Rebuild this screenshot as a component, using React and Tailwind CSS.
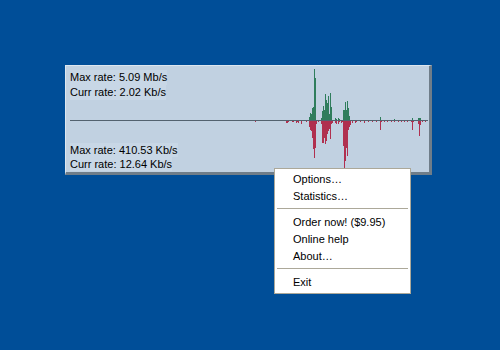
import React from "react";

const bars = [
  // [x, up, down]
  [255, 0, 1], [286, 0, 2], [287, 0, 2], [288, 0, 1], [292, 0, 1], [293, 0, 1],
  [296, 0, 2], [297, 0, 1], [298, 0, 2], [301, 0, 3], [306, 0, 1],
  [309, 3, 6], [310, 7, 9], [311, 6, 10], [312, 12, 17], [313, 13, 28], [314, 51, 37], [315, 42, 27], [316, 0, 3],
  [318, 0, 1], [321, 2, 3], [322, 9, 22], [323, 14, 22], [324, 10, 17], [325, 26, 23], [326, 20, 20],
  [327, 17, 13], [328, 24, 10], [329, 6, 8], [330, 27, 18], [331, 13, 3], [332, 0, 2],
  [335, 2, 2], [336, 1, 3], [338, 2, 3], [339, 1, 1],
  [341, 0, 2], [342, 0, 1], [343, 10, 25], [344, 10, 48], [345, 18, 40], [346, 10, 27], [347, 19, 35],
  [348, 12, 9], [349, 4, 6], [350, 0, 4],
  [352, 0, 2], [355, 0, 2], [356, 0, 1], [360, 0, 1], [364, 0, 2], [368, 0, 1], [372, 0, 1],
  [376, 0, 1], [380, 3, 9], [381, 0, 1], [384, 0, 1], [387, 0, 1], [391, 0, 1], [394, 1, 1],
  [398, 0, 1], [401, 0, 1], [404, 0, 1], [407, 0, 1], [411, 0, 1], [412, 2, 9], [413, 0, 1],
  [418, 2, 3], [419, 2, 15], [420, 2, 4], [422, 0, 1], [425, 0, 1],
];

const OX = 66;
const OY = 66;
const CY = 120;

function Graph() {
  return (
    <svg
      className="absolute inset-0"
      width="364"
      height="106"
      viewBox="0 0 364 106"
      shapeRendering="crispEdges"
    >
      <rect x={70 - OX} y={CY - OY} width={358} height={1} fill="#53626f" />
      {bars.map(([x, up, down], i) => (
        <g key={i}>
          {up > 0 && (
            <rect x={x - OX} y={CY - OY - up} width={1} height={up} fill="#2f7d5c" />
          )}
          {down > 0 && (
            <rect x={x - OX} y={CY - OY + 1} width={1} height={down} fill="#b0304f" />
          )}
        </g>
      ))}
    </svg>
  );
}

function Item({ children }) {
  return (
    <div className="h-[17px] flex items-center pl-[18px] text-[11px] text-black leading-none">
      {children}
    </div>
  );
}

function Sep() {
  return (
    <div className="h-[9px] pt-[3px] px-[2px]">
      <div className="h-px bg-[#aca899]" />
    </div>
  );
}

export default function App() {
  return (
    <div
      className="relative w-[500px] h-[350px] bg-[#004e98] pt-[65px] pl-[65px]"
      style={{ fontFamily: '"Liberation Sans", Arial, sans-serif' }}
    >
      <div className="relative w-[367px] h-[110px] bg-[#c1d1e1] border-t border-l border-[#dde6ef] border-r-[3px] border-b-[3px] border-r-[#6f7d89] border-b-[#6f7d89]">
        <Graph />
        <div className="relative flex flex-col justify-between h-full pt-[4px] pl-[4px] text-[11px] leading-[15px] text-black">
          <div className="flex flex-col items-start">
            <span className="bg-[#c8d7e6]">Max rate: 5.09 Mb/s</span>
            <span className="bg-[#c8d7e6]">Curr rate: 2.02 Kb/s</span>
          </div>
          <div className="flex flex-col items-start leading-[14px] pb-[1px]">
            <span className="bg-[#c8d7e6]">Max rate: 410.53 Kb/s</span>
            <span className="bg-[#c8d7e6]">Curr rate: 12.64 Kb/s</span>
          </div>
        </div>
      </div>

      <div className="absolute left-[274px] top-[168px] w-[137px] bg-white border border-[#aca899] py-[2px]">
        <Item>Options…</Item>
        <Item>Statistics…</Item>
        <Sep />
        <Item>Order now! ($9.95)</Item>
        <Item>Online help</Item>
        <Item>About…</Item>
        <Sep />
        <Item>Exit</Item>
      </div>
    </div>
  );
}
